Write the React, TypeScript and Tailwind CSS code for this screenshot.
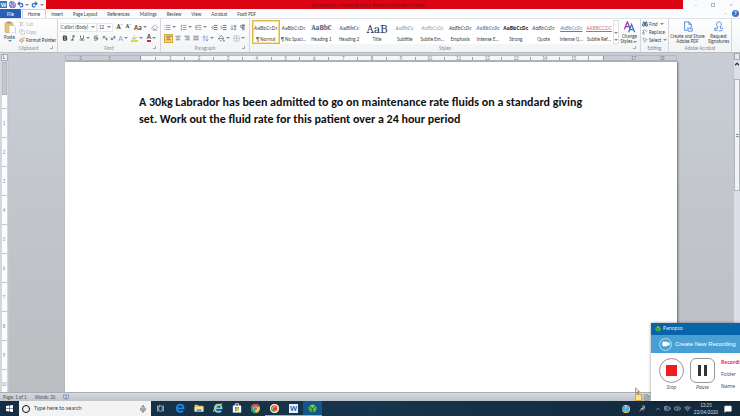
import { clsx } from 'clsx';
import {
  AlignCenter,
  AlignJustify,
  AlignLeft,
  AlignRight,
  ArrowDownAZ,
  ArrowUpDown,
  BatteryMedium,
  Binoculars,
  Bold,
  BookOpen,
  ChevronUp,
  Copy,
  Eraser,
  FileText,
  GalleryHorizontal,
  Grid2x2,
  Highlighter,
  IndentDecrease,
  IndentIncrease,
  Italic,
  List,
  ListOrdered,
  ListTree,
  MessageSquare,
  Mic,
  MousePointer2,
  PaintBucket,
  Paintbrush,
  Pilcrow,
  Redo2,
  Replace,
  Save,
  Scissors,
  Strikethrough,
  Subscript,
  Superscript,
  Underline,
  Undo2,
  Video,
  Volume2,
  Wifi,
} from 'lucide-react';
import type { ReactNode } from 'react';

const TABS = ['Home', 'Insert', 'Page Layout', 'References', 'Mailings', 'Review', 'View', 'Acrobat', 'Foxit PDF'];

const STYLES = [
  { name: '¶ Normal', sample: 'AaBbCcDc', cls: 'text-[5px] text-[#333]' },
  { name: '¶ No Spaci...', sample: 'AaBbCcDc', cls: 'text-[5px] text-[#333]' },
  { name: 'Heading 1', sample: 'AaBbC', cls: 'font-serif text-[7px] font-bold text-[#365f91]' },
  { name: 'Heading 2', sample: 'AaBbCc', cls: 'font-serif text-[6px] font-bold text-[#4f81bd]' },
  { name: 'Title', sample: 'AaB', cls: 'font-serif text-[13px] text-[#26405f]' },
  { name: 'Subtitle', sample: 'AaBbCc.', cls: 'font-serif text-[6px] italic text-[#6f98cc]' },
  { name: 'Subtle Em...', sample: 'AaBbCcDc', cls: 'text-[5px] italic text-[#999]' },
  { name: 'Emphasis', sample: 'AaBbCcDc', cls: 'text-[5px] italic text-[#333]' },
  { name: 'Intense E...', sample: 'AaBbCcDc', cls: 'text-[5px] font-bold italic text-[#6b93cb]' },
  { name: 'Strong', sample: 'AaBbCcDc', cls: 'text-[5px] font-bold text-[#222]' },
  { name: 'Quote', sample: 'AaBbCcDc', cls: 'text-[5px] italic text-[#333]' },
  { name: 'Intense Q...', sample: 'AaBbCcDc', cls: 'text-[5px] italic text-[#4f81bd] underline' },
  { name: 'Subtle Ref...', sample: 'AABBCCDC', cls: 'text-[5px] text-[#d0626b] underline' },
];

function Caret() {
  return <span className="mx-px inline-block border-x-2 border-t-2 border-x-transparent border-t-[#8a8a8a]" />;
}

function IconButton({ label, children, className }: { label: string; children: ReactNode; className?: string }) {
  return (
    <button type="button" aria-label={label} className={clsx('flex shrink-0 items-center justify-center', className)}>
      {children}
    </button>
  );
}

function Group({
  label,
  className,
  launcher,
  children,
}: {
  label: string;
  className?: string;
  launcher?: boolean;
  children: ReactNode;
}) {
  return (
    <section aria-label={label} className={clsx('flex h-full flex-col border-r border-[#d3d7dc]', className)}>
      <div className="flex min-h-0 flex-1">{children}</div>
      <div className="relative h-2 text-center text-[5px] leading-[8px] text-[#858a92]">
        {label}
        {launcher && <span className="absolute right-1 bottom-[3px] size-[3px] border-r border-b border-[#a9adb3]" />}
      </div>
    </section>
  );
}

function TitleBar() {
  return (
    <header className="flex h-[9px] shrink-0 bg-[#fafbfc]">
      <div className="flex w-[46px] shrink-0 items-center gap-px">
        <span className="mr-px flex size-[7px] shrink-0 items-center justify-center bg-[#3b76bd] text-[6px] leading-none font-bold text-white">
          W
        </span>
        <IconButton label="Save">
          <Save className="size-[7px] text-[#4a45a5]" strokeWidth={3} />
        </IconButton>
        <IconButton label="Undo">
          <Undo2 className="size-[7px] text-[#2f6bc0]" strokeWidth={4} />
          <Caret />
        </IconButton>
        <IconButton label="Redo">
          <Redo2 className="size-[7px] text-[#2f6bc0]" strokeWidth={4} />
        </IconButton>
        <Caret />
      </div>
      <h1 className="flex-1 bg-[#dc0413] pl-2 text-center text-[5px] leading-[10px] text-[#8d0a12]">
        Document1 - Microsoft Word (Product Activation Failed)
      </h1>
      <div className="flex w-[57px] items-center justify-around pl-1 text-[6px] leading-none text-[#a3a3a3]">
        <button type="button" aria-label="Minimise">–</button>
        <button type="button" aria-label="Restore" className="size-1 border border-[#b5b5b5]" />
        <button type="button" aria-label="Close">×</button>
      </div>
    </header>
  );
}

function TabStrip() {
  return (
    <nav className="flex h-[10px] shrink-0 items-stretch border-b border-[#e0e3e7] bg-[#fbfcfd] text-[5px] leading-[10px] text-[#444]">
      <button type="button" className="w-[21px] shrink-0 bg-[#2660b8] text-white">
        File
      </button>
      {TABS.map((tab, i) => (
        <button
          key={tab}
          type="button"
          className={clsx(
            'px-[5px] whitespace-nowrap',
            i === 0 && 'ml-px border-x border-t border-[#cfd3d8] bg-white leading-[8px]',
          )}
        >
          {tab}
        </button>
      ))}
      <div className="ml-auto flex items-center gap-1 pr-px">
        <ChevronUp className="size-[5px] text-[#8f959d]" />
        <button
          type="button"
          aria-label="Help"
          className="size-[7px] rounded-full bg-[#3d73c7] text-center text-[6px] leading-[7px] font-bold text-white"
        >
          ?
        </button>
      </div>
    </nav>
  );
}

function ClipboardGroup() {
  return (
    <Group label="Clipboard" className="w-[58px] shrink-0" launcher>
      <button type="button" className="flex w-[19px] shrink-0 flex-col items-center pt-[2px] text-[5px] leading-[6px] text-[#444]">
        <svg viewBox="0 0 12 12" className="mb-px h-3 w-3">
          <rect x="1" y="1.5" width="8" height="10" rx="1" fill="#eec46a" stroke="#c6963c" strokeWidth=".5" />
          <rect x="3" y=".5" width="4" height="2" rx=".5" fill="#8c96a5" />
          <path d="M5 4.5h4.500L11.500 6.500V12H5z" fill="#fff" stroke="#9aa8be" strokeWidth=".5" />
        </svg>
        Paste
        <Caret />
      </button>
      <div className="flex flex-col pt-px text-[5px] leading-[8px] whitespace-nowrap">
        <button type="button" className="flex h-[9px] items-center gap-px text-[#b0b0b0]">
          <Scissors className="size-[6px]" /> Cut
        </button>
        <button type="button" className="flex h-[8px] items-center gap-px text-[#b0b0b0]">
          <Copy className="size-[6px]" /> Copy
        </button>
        <button type="button" className="flex h-[9px] items-center gap-px text-[#333]">
          <Paintbrush className="size-[6px] text-[#a8792e]" /> Format Painter
        </button>
      </div>
    </Group>
  );
}

function FontGroup() {
  return (
    <Group label="Font" className="w-[103px] shrink-0" launcher>
      <div className="flex flex-1 flex-col px-[2px] pt-[3px] text-[#444]">
        <div className="flex h-[10px] items-center justify-between">
          <div className="flex h-[9px] text-[5px] leading-[9px] whitespace-nowrap">
            <button type="button" aria-label="Font name" className="flex w-[37px] items-center justify-between border border-[#e6e8eb] bg-white">
              Calibri (Body) <Caret />
            </button>
            <button type="button" aria-label="Font size" className="flex w-[16px] items-center justify-between border border-[#e6e8eb] bg-white pl-px">
              12 <Caret />
            </button>
          </div>
          <button type="button" aria-label="Grow font" className="flex font-serif text-[7px] leading-none font-bold">
            A<span className="text-[5px] text-[#3a69b5]">ˆ</span>
          </button>
          <button type="button" aria-label="Shrink font" className="flex font-serif text-[6px] leading-none font-bold">
            A<span className="text-[5px] text-[#3a69b5]">ˇ</span>
          </button>
          <button type="button" aria-label="Change case" className="flex items-center text-[7px] leading-none font-bold">
            Aa<Caret />
          </button>
          <IconButton label="Clear formatting">
            <Eraser className="size-[7px] text-[#8c7ba5]" />
          </IconButton>
        </div>
        <div className="flex h-[12px] items-center justify-between pr-px pl-[2px]">
          <IconButton label="Bold"><Bold className="size-[6px]" strokeWidth={5} /></IconButton>
          <IconButton label="Italic"><Italic className="size-[6px]" strokeWidth={3} /></IconButton>
          <IconButton label="Underline"><Underline className="size-[6px]" strokeWidth={3} /><Caret /></IconButton>
          <IconButton label="Strikethrough"><Strikethrough className="size-[6px]" strokeWidth={3} /></IconButton>
          <IconButton label="Subscript"><Subscript className="size-[6px]" strokeWidth={3} /></IconButton>
          <IconButton label="Superscript"><Superscript className="size-[6px]" strokeWidth={3} /></IconButton>
          <button type="button" aria-label="Text effects" className="flex items-center text-[8px] leading-none text-[#78a8dc]">
            A<Caret />
          </button>
          <IconButton label="Highlight">
            <Highlighter className="size-[7px] border-b-2 border-[#d8dc39] text-[#777]" />
            <Caret />
          </IconButton>
          <button type="button" aria-label="Font colour" className="flex items-center text-[7px] leading-[6px] font-bold">
            <span className="border-b-2 border-[#e0202a]">A</span>
            <Caret />
          </button>
        </div>
      </div>
    </Group>
  );
}

function ParagraphGroup() {
  return (
    <Group label="Paragraph" className="w-[89px] shrink-0" launcher>
      <div className="flex flex-1 flex-col px-[3px] pt-[3px] text-[#5d6570]">
        <div className="flex h-[10px] items-center justify-between">
          <IconButton label="Bullets"><List className="size-[7px]" /><Caret /></IconButton>
          <IconButton label="Numbering"><ListOrdered className="size-[7px]" /><Caret /></IconButton>
          <IconButton label="Multilevel list"><ListTree className="size-[7px]" /><Caret /></IconButton>
          <IconButton label="Decrease indent"><IndentDecrease className="size-[7px]" strokeWidth={3} /></IconButton>
          <IconButton label="Increase indent"><IndentIncrease className="size-[7px]" strokeWidth={3} /></IconButton>
          <IconButton label="Sort"><ArrowDownAZ className="size-[7px]" /></IconButton>
          <IconButton label="Show marks"><Pilcrow className="size-[7px]" strokeWidth={3} /></IconButton>
        </div>
        <div className="flex h-[12px] items-center justify-between">
          <div className="flex">
            <IconButton label="Align left" className="size-[9px] border border-[#d8a838] bg-[#fbd766]">
              <AlignLeft className="size-[6px]" strokeWidth={3} />
            </IconButton>
            <IconButton label="Centre" className="size-[9px]"><AlignCenter className="size-[6px]" strokeWidth={3} /></IconButton>
            <IconButton label="Align right" className="size-[9px]"><AlignRight className="size-[6px]" strokeWidth={3} /></IconButton>
            <IconButton label="Justify" className="size-[9px]"><AlignJustify className="size-[6px]" strokeWidth={3} /></IconButton>
          </div>
          <IconButton label="Line spacing"><ArrowUpDown className="size-[7px] text-[#5079b8]" /><Caret /></IconButton>
          <IconButton label="Shading"><PaintBucket className="size-[7px]" /><Caret /></IconButton>
          <IconButton label="Borders"><Grid2x2 className="size-[7px] text-[#aab0b8]" /><Caret /></IconButton>
        </div>
      </div>
    </Group>
  );
}

function StylesGroup() {
  return (
    <Group label="Styles" className="min-w-0 flex-1" launcher>
      <div className="mt-px ml-[2px] flex h-6 min-w-0 flex-1 bg-white">
        {STYLES.map((style, i) => (
          <button
            key={style.name}
            type="button"
            className={clsx(
              'flex min-w-0 flex-1 flex-col items-center overflow-hidden border whitespace-nowrap',
              i === 0 ? 'border-[#dfb93f] outline-1 -outline-offset-2 outline-[#f6e08d]' : 'border-transparent',
            )}
          >
            <span
              className={clsx(
                "flex h-[15px] w-full items-center justify-center overflow-hidden font-['Open_Sans',sans-serif]",
                style.cls,
              )}
            >
              {style.sample}
            </span>
            <span className="text-[5px] leading-[6px] text-[#444]">{style.name}</span>
          </button>
        ))}
        <div className="flex w-[6px] flex-col items-center justify-around border border-[#dcdfe3]">
          <ChevronUp className="size-1 text-[#b9bdc3]" />
          <Caret />
          <Caret />
        </div>
      </div>
      <button type="button" className="flex w-[21px] flex-col items-center pt-[2px] text-[5px] leading-[5px] text-[#444]">
        <svg viewBox="0 0 14 14" className="mb-px h-[13px] w-[13px]" fill="none" strokeWidth="1.500">
          <path d="M1 9.500 4.500 1 8 9.500M2.300 6.500h4.400" stroke="#a23ba5" />
          <path d="M6 13 9.500 4 13 13M7.300 10h4.400" stroke="#3a78c4" />
        </svg>
        <span>Change</span>
        <span className="flex items-center">
          Styles
          <Caret />
        </span>
      </button>
    </Group>
  );
}

function EditingGroup() {
  return (
    <Group label="Editing" className="w-[28px] shrink-0">
      <div className="flex flex-col pt-px pl-px text-[5px] leading-[8px] whitespace-nowrap text-[#444]">
        <button type="button" className="flex h-[9px] items-center gap-px">
          <Binoculars className="size-[6px] text-[#31588f]" strokeWidth={3} /> Find <Caret />
        </button>
        <button type="button" className="flex h-[8px] items-center gap-px">
          <Replace className="size-[6px] text-[#5c7db0]" /> Replace
        </button>
        <button type="button" className="flex h-[9px] items-center gap-px">
          <MousePointer2 className="size-[6px] text-[#777]" /> Select <Caret />
        </button>
      </div>
    </Group>
  );
}

function AcrobatGroup() {
  return (
    <Group label="Adobe Acrobat" className="w-[63px] shrink-0">
      <button
        type="button"
        className="flex w-[37px] shrink-0 flex-col items-center pt-[2px] text-[5px] leading-[5px] whitespace-nowrap text-[#444]"
      >
        <svg viewBox="0 0 12 13" className="mb-[2px] h-3 w-3" fill="none" stroke="#3f7fdc">
          <path d="M5 11H2V1h5l3 3v3M7 1v3h3" />
          <path d="M5 8.500h2M9 8.500h2v3.500H6V8.500M8.500 10V6.500" />
        </svg>
        <span>Create and Share</span>
        <span>Adobe PDF</span>
      </button>
      <button type="button" className="flex flex-1 flex-col items-center pt-[2px] text-[5px] leading-[5px] text-[#444]">
        <svg viewBox="0 0 12 13" className="mb-[2px] h-3 w-3" fill="none" stroke="#3f7fdc">
          <path d="M4.500 7C2 4 3 1 6 1s4 3 1.500 6v1.500H11M4.500 7v1.500H1V11h4M6 12l4-1" />
        </svg>
        <span>Request</span>
        <span>Signatures</span>
      </button>
    </Group>
  );
}

function HorizontalRuler() {
  return (
    <div className="mt-[2px] flex h-[6px] shrink-0 overflow-hidden border border-[#b4b8be] bg-[#c9cdd3] text-center text-[5px] leading-[5px] text-[#7a7f86]">
      <div className="flex w-[74px]">
        <span className="w-[29px]">2</span>
        <span className="w-[29px]">1</span>
      </div>
      <div className="flex flex-1 border-x border-[#8f949b] bg-[#f5f6f8]">
        <span className="flex-1" />
        {Array.from({ length: 15 }, (_, i) => (
          <span key={i} className="flex flex-2 items-center justify-between">
            <i className="h-[3px] border-l border-[#a0a5ab]" />
            {i + 1}
            <i className="h-[3px]" />
          </span>
        ))}
        <span className="flex-1 border-l border-[#a0a5ab]" />
      </div>
      <div className="flex w-[72px] pl-[15px]">
        <span className="w-[29px] shrink-0">17</span>
        <span className="w-[28px] shrink-0">18</span>
      </div>
    </div>
  );
}

function VerticalRuler() {
  return (
    <div className="flex w-[9px] shrink-0 flex-col items-center border-r border-[#c3c7cc] bg-[#d3d7dc]">
      <div className="mt-px size-[7px] border border-[#a7acb3] bg-[#f1f3f5] text-center text-[5px] leading-[5px] text-[#444]">
        L
      </div>
      <div className="mt-px h-[33px] w-[5px] shrink-0 border border-[#b4b8be] bg-[#c5c9cf]" />
      <div className="flex w-[5px] flex-1 flex-col overflow-hidden bg-[#fbfcfd] text-center text-[5px] leading-[29px] text-[#8a8f96]">
        <span className="h-[14px] shrink-0 border-b border-[#c3c7cc]" />
        {Array.from({ length: 10 }, (_, i) => (
          <span key={i} className="h-[29px] shrink-0 border-b border-[#c3c7cc]">
            {i + 1}
          </span>
        ))}
      </div>
    </div>
  );
}

function ScrollBar() {
  return (
    <div className="flex w-[7px] shrink-0 flex-col items-center border-l border-[#c3c7cc] bg-[#dcdfe7]">
      <div className="h-[7px] w-full border border-[#a5aab1] bg-[#e6e8ec]" />
      <ChevronUp className="mt-px size-[6px] shrink-0 text-[#333]" strokeWidth={5} />
      <div className="mt-3 flex h-[112px] w-full flex-col items-center justify-center border border-[#b0b6c0] bg-[#f2f4f8]">
        <span className="h-[3px] w-[3px] border-y border-[#8d939c]" />
      </div>
    </div>
  );
}

function PanoptoMark({ className }: { className?: string }) {
  return (
    <svg viewBox="0 0 12 12" className={className}>
      <circle cx="6" cy="6" r="5.500" fill="#1f6f3a" />
      <path d="M6 .5 9.500 2 6 5.300 2.500 2z" fill="#8bd04f" />
      <path d="M.5 4.200 2.300 3 5.400 6.200 4.800 11.300 1.500 9.200z" fill="#36b552" />
      <path d="M11.500 4.200 9.700 3 6.600 6.200 7.200 11.300l3.300-2.100z" fill="#56bd49" />
    </svg>
  );
}

function PanoptoWindow() {
  return (
    <aside className="absolute right-0 bottom-0 w-[89px] overflow-hidden bg-white font-['Open_Sans','Noto_Sans',sans-serif] shadow-[0_0_3px_#0006]">
      <div className="flex h-3 items-center gap-[2px] bg-[#0763aa] pl-1 text-[5px] text-white">
        <PanoptoMark className="size-[6px]" /> Panopto
      </div>
      <button
        type="button"
        className="flex h-[18px] w-full items-center gap-[3px] bg-[#479fd3] pl-2 font-['Liberation_Sans',sans-serif] text-[6px] whitespace-nowrap text-white"
      >
        <span className="flex size-[13px] shrink-0 items-center justify-center rounded-full border border-[#b8ddf1]">
          <Video className="size-2 fill-white" />
        </span>
        Create New Recording
      </button>
      <div className="flex h-12 gap-[6px] pt-[5px] pl-2 text-[5px] leading-[6px] whitespace-nowrap text-[#444]">
        <button type="button" className="flex w-[25px] shrink-0 flex-col items-center">
          <span className="flex size-[25px] items-center justify-center rounded-full border border-[#a58d98] bg-white">
            <span className="size-[11px] bg-[#ef1c22]" />
          </span>
          <span className="mt-px italic">Stop</span>
        </button>
        <button type="button" className="flex w-[25px] shrink-0 flex-col items-center">
          <span className="flex size-[25px] items-center justify-center gap-[3px] rounded-md border border-[#98939e] bg-white">
            <span className="h-[11px] w-[3px] bg-[#333]" />
            <span className="h-[11px] w-[3px] bg-[#333]" />
          </span>
          <span className="mt-px italic">Pause</span>
        </button>
        <div className="flex flex-col gap-[6px] pt-px">
          <span className="font-bold text-[#e23353]">Recordi</span>
          <span>Folder</span>
          <span>Name</span>
        </div>
      </div>
    </aside>
  );
}

function StatusBar() {
  return (
    <footer className="flex h-[9px] shrink-0 items-center gap-2 border-t border-[#a9aeb4] bg-linear-to-b from-[#d5d9de] to-[#bfc4ca] pl-[3px] text-[5px] leading-none text-[#555]">
      <span>Page: 1 of 1</span>
      <span>Words: 30</span>
      <BookOpen className="size-[6px] text-[#4a6faf]" />
      <div className="mr-[90px] ml-auto flex gap-px">
        <span className="size-[7px] border border-[#d8a838] bg-[#fbe48a]" />
        <FileText className="size-[7px] text-[#777]" />
      </div>
    </footer>
  );
}

function TaskApp({
  label,
  open,
  active,
  children,
}: {
  label: string;
  open?: boolean;
  active?: boolean;
  children: ReactNode;
}) {
  return (
    <button
      type="button"
      aria-label={label}
      className={clsx(
        'flex w-[19px] items-center justify-center border-b',
        open || active ? 'border-[#76b9ed]' : 'border-transparent',
        active && 'bg-[#13568a]',
      )}
    >
      {children}
    </button>
  );
}

function ChromeIcon({ badge }: { badge?: boolean }) {
  return (
    <svg viewBox="0 0 24 24" className="size-[9px]">
      <circle cx="12" cy="12" r="12" fill="#f4c62c" />
      <path d="M12 12 1.600 6A12 12 0 0 1 22.400 6z" fill="#dd4a3c" />
      <path d="M12 12 1.600 6A12 12 0 0 0 12 24z" fill="#2f9f55" />
      <circle cx="12" cy="12" r="5.500" fill="#fff" />
      <circle cx="12" cy="12" r="4.300" fill="#3e7fe8" />
      {badge && <circle cx="12" cy="12" r="10.500" fill="none" stroke="#f3f3f3" strokeWidth="3" />}
      {badge && <circle cx="14" cy="13" r="5" fill="#e33b34" />}
    </svg>
  );
}

function BrowserE({ color, ring }: { color: string; ring?: boolean }) {
  return (
    <svg viewBox="0 0 24 24" className="size-[10px]" fill="none" stroke={color} strokeWidth="4.500">
      <path d="M4 13h16.500C20.500 7 17 4 12.500 4S4.500 7.500 4.500 13s4 8 8.500 8c3 0 5-.8 6.500-2" />
      {ring && <path d="M1.500 21C0 16 14 1 22 2.500" stroke="#efc94a" strokeWidth="2.500" />}
    </svg>
  );
}

function FolderIcon() {
  return (
    <svg viewBox="0 0 24 20" className="h-2 w-[10px]">
      <path d="M1 2h8l2 2.500h12V19H1z" fill="#e9b94a" />
      <path d="M1 7h22v12H1z" fill="#f8e3a0" />
      <path d="M6 13h12v6H6z" fill="#4ba0d8" />
    </svg>
  );
}

function StoreIcon() {
  return (
    <svg viewBox="0 0 24 24" className="size-[10px]">
      <path d="M8 7V2h8v5" fill="none" stroke="#fff" strokeWidth="2" />
      <path d="M2 6h20v17H2z" fill="#fff" />
      <path d="M7 9.500h4.500V14H7z" fill="#e8502f" />
      <path d="M12.500 9.500H17V14h-4.500z" fill="#7cb518" />
      <path d="M7 15h4.500v4.500H7z" fill="#1a9fe0" />
      <path d="M12.500 15H17v4.500h-4.500z" fill="#f3b51b" />
    </svg>
  );
}

function Taskbar() {
  return (
    <div className="flex h-[15px] shrink-0 bg-linear-to-r from-[#142f45] via-[#16344b] to-[#13283b] text-white">
      <button type="button" aria-label="Start" className="flex w-[19px] items-center justify-center">
        <svg viewBox="0 0 14 14" className="size-[7px]" fill="#fff">
          <path d="M0 2 6 1v5.500H0zM7 .8 14 0v6.500H7zM0 7.500h6V13L0 12zM7 7.500h7V14l-7-.8z" />
        </svg>
      </button>
      <label className="flex w-[132px] items-center bg-[#f3f3f4] pr-1 pl-[3px]">
        <span className="size-2 shrink-0 rounded-full border border-[#111]" />
        <input
          type="text"
          aria-label="Search"
          placeholder="Type here to search"
          className="ml-1 min-w-0 flex-1 bg-transparent text-[6px] outline-none placeholder:text-[#444]"
        />
        <Mic className="size-2 text-[#444]" />
      </label>
      <TaskApp label="Task view"><GalleryHorizontal className="size-[7px]" /></TaskApp>
      <TaskApp label="Edge"><BrowserE color="#1f86dd" /></TaskApp>
      <TaskApp label="File Explorer"><FolderIcon /></TaskApp>
      <TaskApp label="Internet Explorer"><BrowserE color="#7fd3f2" ring /></TaskApp>
      <TaskApp label="Store"><StoreIcon /></TaskApp>
      <TaskApp label="Chrome"><ChromeIcon /></TaskApp>
      <TaskApp label="Chrome, profile 2" open><ChromeIcon badge /></TaskApp>
      <TaskApp label="Word" open>
        <span className="size-[9px] bg-[#e6effb] text-center text-[8px] leading-[9px] font-bold text-[#2c5fb3]">W</span>
      </TaskApp>
      <TaskApp label="Panopto" active><PanoptoMark className="size-[9px]" /></TaskApp>
      <div className="ml-auto flex items-center gap-[3px] pr-2 text-[#d5dde4]">
        <span className="mr-[6px] flex size-2 items-center justify-center rounded-full border-r border-b border-[#f0cf4c] bg-[#49a8dd] text-[7px] leading-none font-bold">
          ?
        </span>
        <svg viewBox="0 0 12 12" className="mr-[6px] size-[7px]" fill="none" stroke="currentColor" strokeWidth="1.300">
          <circle cx="8" cy="3" r="1.800" />
          <path d="M1 11 7 4.500M3 6l3 .5 1 3M7 5l3 2" />
        </svg>
        <ChevronUp className="size-[6px]" />
        <BatteryMedium className="size-[7px]" />
        <Volume2 className="size-[7px]" />
        <Wifi className="size-[7px]" />
        <div className="text-center text-[5px] leading-[7px]">
          <div>13:25</div>
          <div>23/04/2020</div>
        </div>
        <MessageSquare className="ml-[3px] size-2 fill-white" />
      </div>
    </div>
  );
}

export default function App() {
  return (
    <div className="flex h-screen min-h-0 flex-col overflow-hidden font-[Calibri,Carlito,Lato,sans-serif]">
      <TitleBar />
      <TabStrip />
      <div className="flex h-[34px] shrink-0 border-b border-[#b9bdc2] bg-linear-to-b from-white to-[#f1f3f5] pr-2">
        <ClipboardGroup />
        <FontGroup />
        <ParagraphGroup />
        <StylesGroup />
        <EditingGroup />
        <AcrobatGroup />
      </div>
      <div className="relative flex min-h-0 flex-1 flex-col">
        <div className="flex min-h-0 flex-1 bg-linear-to-b from-[#c9cdd5] to-[#babec1]">
          <VerticalRuler />
          <main className="flex min-w-0 flex-1 flex-col px-14">
            <HorizontalRuler />
            <article className="mt-px flex-1 bg-white pt-8 pr-[76px] pl-[74px] text-[12px] leading-[17px] font-bold text-[#111] shadow-[1px_0_2px_#0007]">
              <p>
                A 30kg Labrador has been admitted to go on maintenance rate fluids on a standard giving set. Work out
                the fluid rate for this patient over a 24 hour period
              </p>
            </article>
          </main>
          <ScrollBar />
        </div>
        <StatusBar />
        <PanoptoWindow />
        <svg viewBox="0 0 8 12" className="absolute right-[100px] bottom-[6px] h-2 w-[5px]" fill="#fff" stroke="#555">
          <path d="M1 1v8.500l2-2L4.500 11 6 10.300 4.600 7H7z" />
        </svg>
      </div>
      <Taskbar />
    </div>
  );
}
